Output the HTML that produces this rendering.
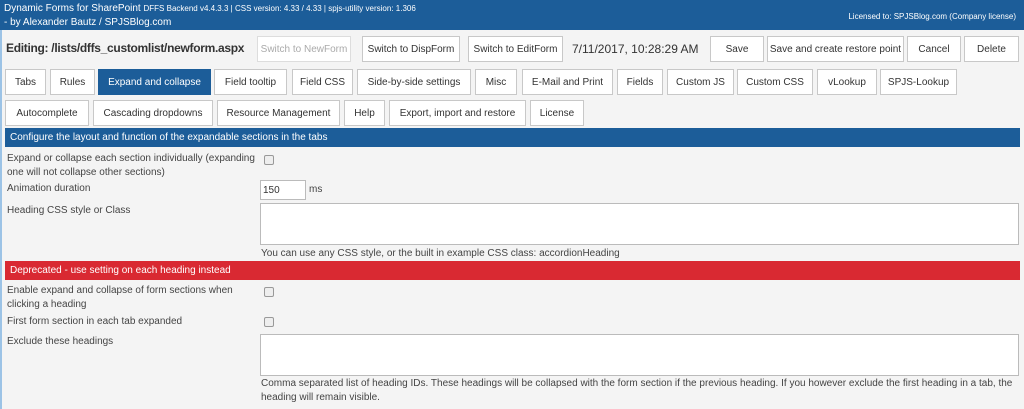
<!DOCTYPE html><html><head><style>
*{box-sizing:border-box;margin:0;padding:0}
body{width:1024px;height:409px;background:#f4f4f4;font-family:"Liberation Sans",sans-serif;color:#333;position:relative;overflow:hidden;font-size:10px}
.a{position:absolute;white-space:nowrap}
.hd{left:0;top:0;width:1024px;height:30px;background:#1c5d99;color:#fff}
.b{position:absolute;background:#fff;border:1px solid #c8c8c8;font-size:10px;color:#333;display:flex;align-items:center;justify-content:center;white-space:nowrap}
.t{height:26px;top:69px}
.r2{top:100px}
.act{background:#1c5d99;color:#fff;border-color:#1c5d99}
.bar{left:5px;width:1015px;height:19px;color:#fff;font-size:10px;padding:4px 0 0 5px}
.l{left:7px;font-size:10px;color:#444}
.cb{position:absolute;width:10px;height:10px;border:1px solid #999;background:#eee;border-radius:2px;left:264px}
.in{position:absolute;background:#fff;border:1px solid #bbb}
</style></head><body>
<div class="a" style="left:0;top:30px;width:2px;height:379px;background:#9cc3e6"></div>
<div class="a hd"><div class="a" style="left:4px;top:3px;font-size:10px">Dynamic Forms for SharePoint <span style="font-size:8px">DFFS Backend v4.4.3.3 | CSS version: 4.33 / 4.33 | spjs-utility version: 1.306</span></div>
<div class="a" style="left:4px;top:17px;font-size:10px">- by Alexander Bautz / SPJSBlog.com</div>
<div class="a" style="right:8px;top:12px;font-size:8px">Licensed to: SPJSBlog.com (Company license)</div></div>
<div class="a" style="left:6px;top:41px;font-size:12px;font-weight:bold;color:#333;letter-spacing:-0.3px">Editing: /lists/dffs_customlist/newform.aspx</div>
<div class="b" style="left:257px;top:36px;width:94px;height:26px;color:#aaa;border-color:#ddd">Switch to NewForm</div>
<div class="b" style="left:362px;top:36px;width:98px;height:26px">Switch to DispForm</div>
<div class="b" style="left:468px;top:36px;width:95px;height:26px">Switch to EditForm</div>
<div class="a" style="left:572px;top:42px;font-size:12px">7/11/2017, 10:28:29 AM</div>
<div class="b" style="left:710px;top:36px;width:54px;height:26px">Save</div>
<div class="b" style="left:767px;top:36px;width:137px;height:26px">Save and create restore point</div>
<div class="b" style="left:907px;top:36px;width:54px;height:26px">Cancel</div>
<div class="b" style="left:964px;top:36px;width:55px;height:26px">Delete</div>
<div class="b t" style="left:5px;width:41px">Tabs</div>
<div class="b t" style="left:50px;width:45px">Rules</div>
<div class="b t act" style="left:98px;width:113px">Expand and collapse</div>
<div class="b t" style="left:214px;width:73px">Field tooltip</div>
<div class="b t" style="left:292px;width:61px">Field CSS</div>
<div class="b t" style="left:357px;width:114px">Side-by-side settings</div>
<div class="b t" style="left:475px;width:42px">Misc</div>
<div class="b t" style="left:522px;width:91px">E-Mail and Print</div>
<div class="b t" style="left:617px;width:46px">Fields</div>
<div class="b t" style="left:667px;width:67px">Custom JS</div>
<div class="b t" style="left:737px;width:76px">Custom CSS</div>
<div class="b t" style="left:817px;width:60px">vLookup</div>
<div class="b t" style="left:880px;width:77px">SPJS-Lookup</div>
<div class="b t r2" style="left:5px;width:84px">Autocomplete</div>
<div class="b t r2" style="left:93px;width:120px">Cascading dropdowns</div>
<div class="b t r2" style="left:217px;width:123px">Resource Management</div>
<div class="b t r2" style="left:344px;width:41px">Help</div>
<div class="b t r2" style="left:389px;width:137px">Export, import and restore</div>
<div class="b t r2" style="left:530px;width:54px">License</div>
<div class="a bar" style="top:128px;background:#1c5d99">Configure the layout and function of the expandable sections in the tabs</div>
<div class="a l" style="top:152px;line-height:14px">Expand or collapse each section individually (expanding<br>one will not collapse other sections)</div>
<div class="cb" style="top:155px"></div>
<div class="a l" style="top:183px">Animation duration</div>
<div class="in" style="left:260px;top:180px;width:46px;height:20px;font-size:10px;padding:4px 2px;color:#333">150</div>
<div class="a l" style="left:309px;top:184px">ms</div>
<div class="a l" style="top:205px">Heading CSS style or Class</div>
<div class="in" style="left:260px;top:203px;width:759px;height:42px"></div>
<div class="a l" style="left:261px;top:248px">You can use any CSS style, or the built in example CSS class: accordionHeading</div>
<div class="a bar" style="top:261px;background:#d92932">Deprecated - use setting on each heading instead</div>
<div class="a l" style="top:284px;line-height:14px">Enable expand and collapse of form sections when<br>clicking a heading</div>
<div class="cb" style="top:287px"></div>
<div class="a l" style="top:316px">First form section in each tab expanded</div>
<div class="cb" style="top:317px"></div>
<div class="a l" style="top:336px">Exclude these headings</div>
<div class="in" style="left:260px;top:334px;width:759px;height:42px"></div>
<div class="a l" style="left:261px;top:377px;line-height:14px">Comma separated list of heading IDs. These headings will be collapsed with the form section if the previous heading. If you however exclude the first heading in a tab, the<br>heading will remain visible.</div>
</body></html>
